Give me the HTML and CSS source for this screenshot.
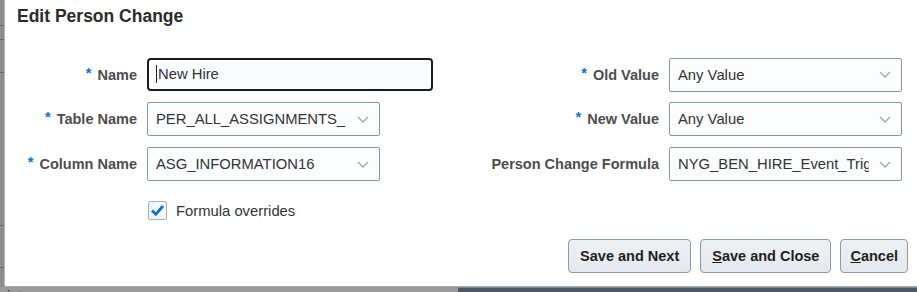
FILE: index.html
```html
<!doctype html>
<html>
  <head>
    <meta charset="utf-8">
    <title>Edit Person Change</title>
    <link rel="stylesheet" href="styles.css">
  </head>
  <body>
    <div class="stage">
      <div class="gutter"></div>
      <div class="dialog">
        <h1 class="dlg-title">Edit Person Change</h1>
        <div class="form">
          <label class="lbl"><span class="req">*</span>Name</label>
          <div class="field">
            <div class="input focused"><span class="caret"></span>New Hire</div>
          </div>
          <label class="lbl"><span class="req">*</span>Old Value</label>
          <div class="field">
            <div class="select">
              <span class="val">Any Value</span>
              <svg class="chev" width="12" height="7" viewBox="0 0 12 7"><polyline points="1,1 6,6 11,1" fill="none" stroke="#a3a3a3" stroke-width="1.3"/></svg>
            </div>
          </div>

          <label class="lbl"><span class="req">*</span>Table Name</label>
          <div class="field">
            <div class="select">
              <span class="val">PER_ALL_ASSIGNMENTS_</span>
              <svg class="chev" width="12" height="7" viewBox="0 0 12 7"><polyline points="1,1 6,6 11,1" fill="none" stroke="#a3a3a3" stroke-width="1.3"/></svg>
            </div>
          </div>
          <label class="lbl"><span class="req">*</span>New Value</label>
          <div class="field">
            <div class="select">
              <span class="val">Any Value</span>
              <svg class="chev" width="12" height="7" viewBox="0 0 12 7"><polyline points="1,1 6,6 11,1" fill="none" stroke="#a3a3a3" stroke-width="1.3"/></svg>
            </div>
          </div>

          <label class="lbl"><span class="req">*</span>Column Name</label>
          <div class="field">
            <div class="select">
              <span class="val">ASG_INFORMATION16</span>
              <svg class="chev" width="12" height="7" viewBox="0 0 12 7"><polyline points="1,1 6,6 11,1" fill="none" stroke="#a3a3a3" stroke-width="1.3"/></svg>
            </div>
          </div>
          <label class="lbl">Person Change Formula</label>
          <div class="field">
            <div class="select">
              <span class="val">NYG_BEN_HIRE_Event_Trig</span>
              <svg class="chev" width="12" height="7" viewBox="0 0 12 7"><polyline points="1,1 6,6 11,1" fill="none" stroke="#a3a3a3" stroke-width="1.3"/></svg>
            </div>
          </div>

          <div></div>
          <div class="check-row">
            <span class="cbox">
              <svg width="17" height="17" viewBox="0 0 17 17"><polyline points="3,8.5 6.8,12.3 14,4" fill="none" stroke="#0a74cc" stroke-width="2.8"/></svg>
            </span>
            <span class="cb-text">Formula overrides</span>
          </div>
        </div>
        <div class="actions">
          <button class="btn">Save and Next</button>
          <button class="btn"><span class="ak">S</span>ave and Close</button>
          <button class="btn btn-cancel"><span class="ak">C</span>ancel</button>
        </div>
      </div>
    </div>
    <div class="under">
      <div class="under-page">
        <span class="u1">ixt vxwan</span>
        <span class="u2">aux vaux</span>
        <span class="u3">aux vaux</span>
      </div>
      <div class="under-bar"></div>
    </div>
  </body>
</html>
```

FILE: styles.css
```css
html, body {margin:0;padding:0;}
body {width:917px;height:292px;overflow:hidden;background:#8f8f8f;
  font-family:"Liberation Sans", Arial, sans-serif;color:#333;}

.stage {display:flex;height:287px;}
.gutter {width:4px;flex:none;
  background:
    linear-gradient(#666,#666) 0 25px/4px 1px no-repeat,
    linear-gradient(#666,#666) 0 39px/4px 1px no-repeat,
    linear-gradient(#666,#666) 0 72px/4px 1px no-repeat,
    linear-gradient(#6a6a6a,#6a6a6a) 0 225px/4px 1px no-repeat,
    linear-gradient(#6a6a6a,#6a6a6a) 0 267px/4px 1px no-repeat,
    #8e8e8e;}
.dialog {flex:1;background:#fff;border-left:1px solid #b4b4b4;border-bottom:1px solid #a9a9a9;box-sizing:border-box;}

.dlg-title {margin:0;padding:5px 0 0 12px;font-size:17.5px;line-height:22px;font-weight:bold;color:#2b2b2b;}

.form {display:grid;grid-template-columns:132px 286px 216px 233px;grid-template-rows:34px 34px 34px 38px;
  column-gap:10px;row-gap:10.8px;margin-top:30.5px;}
.lbl {display:flex;align-items:center;justify-content:flex-end;font-size:14.5px;font-weight:bold;color:#4d4d4d;white-space:nowrap;}
.req {color:#0572ce;margin-right:6px;position:relative;top:-2px;}
.field {display:flex;align-items:flex-start;}

.input {box-sizing:border-box;width:286px;height:33px;border:2px solid #1b1b1b;border-radius:4px;background:#fafcfe;
  display:flex;align-items:center;padding-left:7px;font-size:14.8px;color:#333;}
.caret {display:inline-block;width:1px;height:18px;background:#222;margin-right:1px;}

.select {box-sizing:border-box;width:233px;height:34px;border:1px solid #8796a3;border-radius:2px;background:#fcfdfe;
  display:flex;align-items:center;padding:0 10px 0 8px;font-size:14.8px;color:#333;}
.val {flex:1;overflow:hidden;white-space:nowrap;margin-right:10px;}
.chev {flex:none;}

.check-row {display:flex;align-items:center;padding-left:1px;}
.cbox {box-sizing:border-box;width:19px;height:19px;border:1px solid #a9b1b8;border-radius:2px;background:#f3f6f9;
  display:flex;align-items:center;justify-content:center;}
.cb-text {margin-left:9px;font-size:14.8px;color:#333;}

.actions {display:flex;justify-content:flex-end;gap:9px;padding-right:9px;margin-top:9.5px;}
.btn {box-sizing:border-box;height:34px;padding:0 11px;border:1px solid #8c99a4;border-radius:4px;
  background:linear-gradient(#eef1f4,#e4e8ec);font-family:"Liberation Sans", Arial, sans-serif;
  font-size:14.5px;font-weight:bold;color:#1f1f1f;}
.btn-cancel {padding:0 9px;}
.ak {text-decoration:underline;}

.under {display:flex;height:5px;overflow:hidden;}
.under-page {width:458px;flex:none;background:#9a9a9a;overflow:hidden;white-space:nowrap;}
.under-page span {display:inline-block;font-size:15px;line-height:15px;color:#2e2e2e;margin-top:-6px;}
.u1 {margin-left:7px;}
.u2 {margin-left:36px;}
.u3 {margin-left:62px;}
.under-bar {flex:1;background:#4c5863;border-top:1px solid #7a8793;}
```
